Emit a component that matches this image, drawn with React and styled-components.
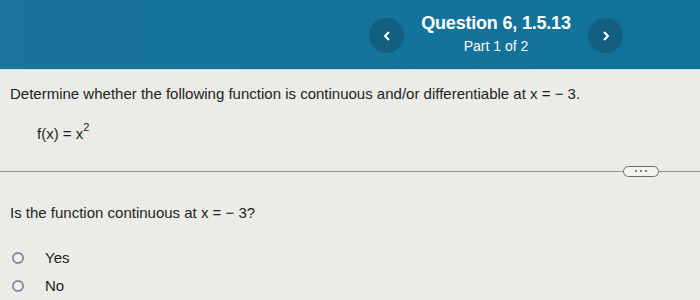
import React from 'react';
import styled, { createGlobalStyle } from 'styled-components';

const GlobalStyle = createGlobalStyle`
  body {
    margin: 0;
    background: #ebebe8;
    font-family: 'Liberation Sans', Arial, sans-serif;
    color: #1e1e1e;
  }
`;

const Page = styled.div`
  width: 700px;
  height: 300px;
  overflow: hidden;
  background: #ebebe8;
`;

const Header = styled.div`
  height: 70px;
  background: linear-gradient(90deg, #1b7499 0%, #15739b 60%, #0f7298 100%);
  border-bottom: 1px solid #c9dbe3;
  box-sizing: border-box;
  display: flex;
  justify-content: flex-start;
  align-items: center;
  padding-left: 369px;
`;

const NavButton = styled.div`
  width: 35px;
  height: 35px;
  border-radius: 50%;
  background: #135f80;
  display: flex;
  align-items: center;
  justify-content: center;
  margin-top: 2px;
`;

const TitleBlock = styled.div`
  width: 184px;
  text-align: center;
  color: #fff;
  margin-bottom: 1px;
`;

const Title = styled.div`
  font-size: 18px;
  font-weight: bold;
  line-height: 22px;
  letter-spacing: -0.2px;
`;

const Sub = styled.div`
  font-size: 14px;
  line-height: 20px;
  margin-top: 2px;
`;

const Prompt = styled.div`
  font-size: 15px;
  padding: 14px 0 0 10px;
  line-height: 20px;
`;

const Formula = styled.div`
  font-size: 15px;
  padding: 15px 0 0 37px;
  line-height: 20px;
  sup {
    font-size: 11px;
    position: relative;
    top: -2px;
  }
`;

const DividerRow = styled.div`
  display: flex;
  align-items: center;
  margin-top: 21px;
  height: 12px;
`;

const Line = styled.div`
  flex: ${p => (p.$grow ? 1 : 'none')};
  width: ${p => (p.$grow ? 'auto' : '41px')};
  height: 1px;
  background: #8f8f8f;
`;

const Pill = styled.div`
  width: 34px;
  height: 9px;
  border: 1px solid #6c6c6c;
  border-radius: 6px;
  background: #f2f2f0;
  display: flex;
  align-items: center;
  justify-content: center;
  gap: 3px;
`;

const Dot = styled.span`
  width: 2px;
  height: 2px;
  background: #555;
  border-radius: 50%;
`;

const Question = styled.div`
  font-size: 15px;
  padding: 26px 0 0 10px;
  line-height: 20px;
`;

const Options = styled.div`
  padding: 25px 0 0 12px;
  display: flex;
  flex-direction: column;
  gap: 8px;
`;

const Option = styled.label`
  display: flex;
  align-items: center;
  font-size: 15px;
  line-height: 20px;
  gap: 21px;
`;

const Radio = styled.span`
  width: 8px;
  height: 8px;
  border: 2px solid #8989a2;
  border-radius: 50%;
  background: #f4f4f4;
`;

const Chevron = ({ dir }) => (
  <svg width="10" height="10" viewBox="0 0 10 10">
    <path
      d={dir === 'left' ? 'M6.5 1.5 L3 5 L6.5 8.5' : 'M3.5 1.5 L7 5 L3.5 8.5'}
      fill="none"
      stroke="#fff"
      strokeWidth="2"
      strokeLinecap="round"
      strokeLinejoin="round"
    />
  </svg>
);

export default function App() {
  return (
    <Page>
      <GlobalStyle />
      <Header>
        <NavButton><Chevron dir="left" /></NavButton>
        <TitleBlock>
          <Title>Question 6, 1.5.13</Title>
          <Sub>Part 1 of 2</Sub>
        </TitleBlock>
        <NavButton><Chevron dir="right" /></NavButton>
      </Header>
      <Prompt>
        Determine whether the following function is continuous and/or differentiable at x = − 3.
      </Prompt>
      <Formula>
        f(x) = x<sup>2</sup>
      </Formula>
      <DividerRow>
        <Line $grow />
        <Pill><Dot /><Dot /><Dot /></Pill>
        <Line />
      </DividerRow>
      <Question>Is the function continuous at x = − 3?</Question>
      <Options>
        <Option><Radio />Yes</Option>
        <Option><Radio />No</Option>
      </Options>
    </Page>
  );
}
